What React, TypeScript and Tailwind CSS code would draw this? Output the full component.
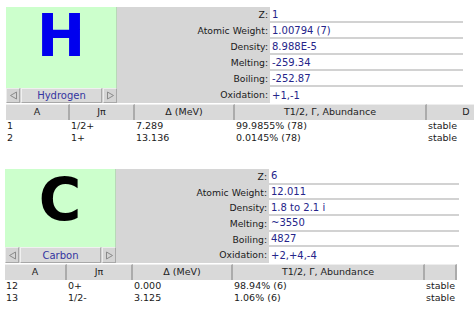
import React from "react";

type Row = { a: string; j: string; d: string; t: string; s: string };

type PanelProps = {
  symbol: string;
  symbolColor: string;
  name: string;
  info: [string, string][];
  rows: Row[];
  left: string;
  valueW: string;
  rowH: string;
  greenH: string;
  greenPad: string;
  navH: string;
  cols: string[];
  lastW: string;
  lastLabel: string;
  top: string;
};

const font = { fontFamily: '"DejaVu Sans", Verdana, sans-serif' };

function Arrow({ dir }: { dir: "l" | "r" }) {
  return (
    <div className="w-[14px] h-full bg-[#d4d4d4] border border-t-[#ececec] border-l-[#ececec] border-r-[#a8a8a8] border-b-[#a8a8a8] flex items-center justify-center">
      <svg width="9" height="9" viewBox="0 0 9 9">
        {dir === "l" ? (
          <polygon points="7.5,1 1.5,4.5 7.5,8" fill="none" stroke="#8a8a8a" strokeWidth="1" />
        ) : (
          <polygon points="1.5,1 7.5,4.5 1.5,8" fill="none" stroke="#8a8a8a" strokeWidth="1" />
        )}
      </svg>
    </div>
  );
}

function Panel(p: PanelProps) {
  const headers = ["A", "Jπ", "Δ (MeV)", "T1/2, Γ, Abundance", p.lastLabel];
  const widths = [...p.cols, p.lastW];
  return (
    <div className={`${p.left} ${p.top}`} style={font}>
      <div className="flex">
        <div className="w-[111px] shrink-0 flex flex-col">
          <div className={`${p.greenH} ${p.greenPad} bg-[#ccffcc] border-r border-[#b8d8b8] flex items-start justify-center`}>
            <span
              className="font-bold leading-none text-[58px]"
              style={{ fontFamily: '"DejaVu Sans", Verdana, sans-serif', color: p.symbolColor }}
            >
              {p.symbol}
            </span>
          </div>
          <div className={`${p.navH} flex bg-[#d4d4d4]`}>
            <Arrow dir="l" />
            <div className="flex-1 mx-[1px] bg-[#d9d9d9] border border-t-[#f0f0f0] border-l-[#f0f0f0] border-r-[#a8a8a8] border-b-[#a8a8a8] flex items-center justify-center text-[10px] text-[#3434a0]">
              {p.name}
            </div>
            <Arrow dir="r" />
          </div>
        </div>
        <div className="w-[153px] shrink-0 bg-[#d6d6d6] flex flex-col">
          {p.info.map(([k]) => (
            <div key={k} className={`${p.rowH} flex items-center justify-end pr-[2px] text-[9.25px] text-[#1a1a1a]`}>
              {k}:
            </div>
          ))}
        </div>
        <div className={`${p.valueW} shrink-0 flex flex-col bg-[#d6d6d6]`}>
          {p.info.map(([k, v], i) => (
            <div
              key={k}
              className={`${p.rowH} flex items-center pl-[2px] text-[10px] text-[#25258a] bg-white ${i < p.info.length - 1 ? "border-b-2 border-b-[#d2d2d2]" : ""}`}
            >
              {v}
            </div>
          ))}
        </div>
      </div>
      <div className="flex mt-[1px]">
        {headers.map((h, i) => (
          <div
            key={i}
            className={`${widths[i]} shrink-0 h-[16px] bg-[#d9d9d9] border-t border-t-[#eeeeee] border-r-2 border-r-[#ababab] flex items-center justify-center text-[9.5px] text-[#222]`}
          >
            {h}
          </div>
        ))}
      </div>
      <div className="flex flex-col">
        {p.rows.map((r, ri) => (
          <div key={ri} className="flex h-[12px] items-center text-[9.5px] text-[#1a1a1a]">
            {[r.a, r.j, r.d, r.t, r.s].map((c, i) => (
              <div key={i} className={`${widths[i]} shrink-0 pl-[1px] leading-none`}>
                {c}
              </div>
            ))}
          </div>
        ))}
      </div>
    </div>
  );
}

export default function App() {
  return (
    <div className="w-[474px] h-[322px] bg-white overflow-hidden flex flex-col">
      <Panel
        symbol="H"
        symbolColor="#0000ee"
        name="Hydrogen"
        info={[
          ["Z", "1"],
          ["Atomic Weight", "1.00794 (7)"],
          ["Density", "8.988E-5"],
          ["Melting", "-259.34"],
          ["Boiling", "-252.87"],
          ["Oxidation", "+1,-1"],
        ]}
        rows={[
          { a: "1", j: "1/2+", d: "7.289", t: "99.9855% (78)", s: "stable" },
          { a: "2", j: "1+", d: "13.136", t: "0.0145% (78)", s: "stable" },
        ]}
        left="ml-[6px]"
        top="mt-[7px]"
        valueW="w-[193px]"
        rowH="h-[16px]"
        greenH="h-[81px]"
        greenPad="pt-0"
        navH="h-[15px]"
        cols={["w-[64px]", "w-[65px]", "w-[100px]", "w-[192px]"]}
        lastW="w-[80px]"
        lastLabel="D"
      />
      <Panel
        symbol="C"
        symbolColor="#000000"
        name="Carbon"
        info={[
          ["Z", "6"],
          ["Atomic Weight", "12.011"],
          ["Density", "1.8 to 2.1 i"],
          ["Melting", "~3550"],
          ["Boiling", "4827"],
          ["Oxidation", "+2,+4,-4"],
        ]}
        rows={[
          { a: "12", j: "0+", d: "0.000", t: "98.94% (6)", s: "stable" },
          { a: "13", j: "1/2-", d: "3.125", t: "1.06% (6)", s: "stable" },
        ]}
        left="ml-[5px]"
        top="mt-[25px]"
        valueW="w-[190px]"
        rowH="h-[15.67px]"
        greenH="h-[78px]"
        greenPad="pt-[2px]"
        navH="h-[16px]"
        cols={["w-[62px]", "w-[66px]", "w-[100px]", "w-[192px]"]}
        lastW="w-[32px]"
        lastLabel=""
      />
    </div>
  );
}
